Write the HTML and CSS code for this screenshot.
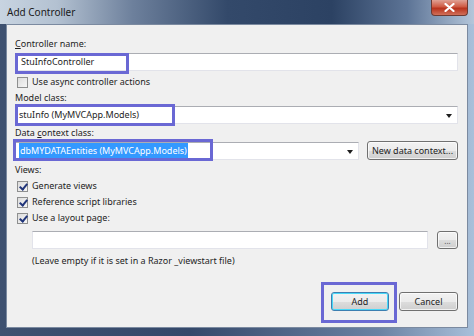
FILE: index.html
```html
<!DOCTYPE html>
<html lang="en">
<head>
    <meta charset="UTF-8">
    <title>Add Controller</title>
    <link rel="stylesheet" href="styles.css">
</head>
<body>

    <div class="window">
        <div class="titlebar">
            <span class="title">Add Controller</span>
            <span class="close">
                <svg width="11" height="9" viewBox="0 0 11 9"><path d="M1.5 1 L9.5 8 M9.5 1 L1.5 8" stroke="#fff" stroke-width="2.2" stroke-linecap="round"/></svg>
            </span>
        </div>

        <div class="client">
            <div class="lbl first"><u>C</u>ontroller name:</div>
            <div class="field">
                <div class="textbox">StuInfoController</div>
                <span class="mark mark-name"></span>
            </div>

            <div class="check"><span class="box"></span>Use async controller actions</div>

            <div class="lbl">Model class:</div>
            <div class="field">
                <div class="textbox combo">stuInfo (MyMVCApp.Models)<span class="arrow"></span></div>
                <span class="mark mark-model"></span>
            </div>

            <div class="lbl">Data <u>c</u>ontext class:</div>
            <div class="row">
                <div class="field grow">
                    <div class="textbox combo"><span class="selected">dbMYDATAEntities (MyMVCApp.Models)</span><span class="arrow"></span></div>
                    <span class="mark mark-context"></span>
                </div>
                <button class="btn btn-new">New data context...</button>
            </div>

            <div class="lbl views">Views:</div>
            <div class="check tight"><span class="box on"></span>Generate views</div>
            <div class="check tight"><span class="box on"></span>Reference script libraries</div>
            <div class="check tight"><span class="box on"></span>Use a layout page:</div>

            <div class="row layout">
                <div class="textbox grow"></div>
                <button class="btn btn-dots">...</button>
            </div>
            <div class="hint">(Leave empty if it is set in a Razor _viewstart file)</div>

            <div class="actions">
                <div class="field">
                    <button class="btn btn-add">Add</button>
                    <span class="mark mark-add"></span>
                </div>
                <button class="btn btn-cancel">Cancel</button>
            </div>
        </div>
    </div>

</body>
</html>
```

FILE: styles.css
```css
/* Whole page is one dialog window */
body {
    margin: 0;
    font-family: "Noto Sans", "Open Sans", sans-serif;
    font-size: 9px;
    color: #1e1e1e;
    overflow: hidden;
}

.window {
    width: 474px;
    height: 336px;
    box-sizing: border-box;
    padding: 0 6px 8px 6px;
    background: linear-gradient(90deg, #3e5170 0%, #34486a 40%, #6b82a3 80%, #a9c0da 100%);
    display: flex;
    flex-direction: column;
}

/* Title bar */
.titlebar {
    height: 24px;
    margin: 0 -6px;
    padding: 0 6px 0 7px;
    display: flex;
    align-items: flex-start;
    justify-content: space-between;
    background: linear-gradient(90deg, #c8d4e1 0%, #b3c1d1 12%, #6d809c 28%, #33496a 48%, #2c4263 70%, #5d7496 86%, #b4c6da 100%);
}

.title {
    font-size: 10px;
    line-height: 24px;
    color: #1b1b1b;
}

.close {
    width: 37px;
    height: 16px;
    box-sizing: border-box;
    border: 1px solid #6e3a32;
    border-top: none;
    border-radius: 0 0 4px 4px;
    background: linear-gradient(#e0a194 0%, #cf5a43 45%, #b8321c 55%, #d0705a 100%);
    display: flex;
    align-items: center;
    justify-content: center;
}

/* Client area */
.client {
    flex: 1;
    background: #f0f0f0;
    border: 1px solid #7b8aa0;
    padding: 12px 9px 0 8px;
}

.lbl {
    line-height: 14px;
    height: 14px;
    margin-top: 2px;
}

.lbl.first { margin-top: 0; }
.lbl.views { margin-top: 3px; }

.field {
    position: relative;
}

.textbox {
    height: 18px;
    box-sizing: border-box;
    background: #fff;
    border: 1px solid #e2e3ea;
    border-top-color: #abadb3;
    padding-left: 5px;
    line-height: 16px;
    white-space: nowrap;
    margin-top: 2px;
}

.combo {
    position: relative;
    margin-top: 1px;
    padding-left: 3px;
}

.arrow {
    position: absolute;
    right: 5px;
    top: 7px;
    border-left: 3px solid transparent;
    border-right: 3px solid transparent;
    border-top: 4px solid #1e1e1e;
}

.selected {
    background: #3399ff;
    color: #fff;
    padding: 1px 1px;
}

/* Annotation boxes drawn over the dialog */
.mark {
    position: absolute;
    border: 3px solid #6a68d4;
    pointer-events: none;
}

.mark-name { left: 0; top: 0; width: 108px; height: 15px; }
.mark-model { left: 0; top: -2px; width: 154px; height: 16px; }
.mark-context { left: -2px; top: -2px; width: 194px; height: 16px; }
.mark-add { left: -10px; top: -10px; width: 70px; height: 35px; }

/* Checkboxes */
.check {
    display: flex;
    align-items: center;
    height: 14px;
    line-height: 14px;
    margin-top: 4px;
    padding-left: 2px;
}

.check.tight { margin-top: 2px; }

.box {
    width: 11px;
    height: 11px;
    box-sizing: border-box;
    border: 1px solid #8e8f8f;
    background: linear-gradient(135deg, #dcdcdc, #f6f6f6);
    margin-right: 4px;
    position: relative;
}

.box.on::after {
    content: "";
    position: absolute;
    left: 3px;
    top: 0;
    width: 3px;
    height: 6px;
    border-right: 2px solid #21357a;
    border-bottom: 2px solid #21357a;
    transform: rotate(40deg);
}

.row {
    display: flex;
    align-items: flex-start;
    margin-top: 1px;
}

.grow { flex: 1; }

.row.layout {
    margin-top: 6px;
    padding-left: 17px;
}

.row.layout .textbox { margin-top: 0; }

/* Buttons */
.btn {
    font-family: inherit;
    font-size: 9px;
    color: #1e1e1e;
    height: 19px;
    padding: 0;
    white-space: nowrap;
    border: 1px solid #707070;
    border-radius: 3px;
    background: linear-gradient(#f2f2f2 0%, #ebebeb 50%, #dddddd 50%, #cfcfcf 100%);
    box-shadow: inset 0 0 0 1px rgba(255, 255, 255, 0.7);
}

.btn-new {
    width: 91px;
    margin-left: 8px;
}

.btn-dots {
    width: 21px;
    height: 18px;
    margin-left: 9px;
    font-size: 8px;
    color: #555;
}

.hint {
    margin-top: 5px;
    padding-left: 17px;
    line-height: 14px;
}

.actions {
    display: flex;
    justify-content: flex-end;
    gap: 10px;
    margin-top: 24px;
}

.btn-add {
    width: 58px;
    display: block;
    border-color: #3c7fb1;
    box-shadow: inset 0 0 0 1px #48d8f8;
}

.btn-cancel {
    width: 59px;
}
```
